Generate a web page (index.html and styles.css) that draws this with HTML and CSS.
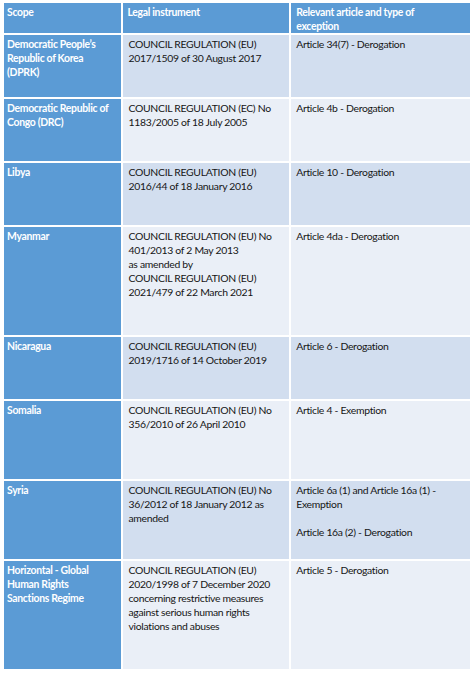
FILE: index.html
```html
<!DOCTYPE html>
<html>
<head>
<meta charset="utf-8">
<link rel="stylesheet" href="styles.css">
</head>
<body>
<table class="sanctions">
  <colgroup>
    <col class="c-scope">
    <col class="c-legal">
    <col class="c-article">
  </colgroup>
  <thead>
    <tr class="h-head">
      <th class="scope">Scope</th>
      <th class="legal">Legal instrument</th>
      <th class="article">Relevant article and type of<br>exception</th>
    </tr>
  </thead>
  <tbody>
    <tr class="dark h62">
      <th class="scope">Democratic People’s<br>Republic of Korea<br>(DPRK)</th>
      <td class="legal">COUNCIL REGULATION (EU)<br>2017/1509 of 30 August 2017</td>
      <td class="article">Article 34(7) - Derogation</td>
    </tr>
    <tr class="light h62">
      <th class="scope">Democratic Republic of<br>Congo (DRC)</th>
      <td class="legal">COUNCIL REGULATION (EC) No<br>1183/2005 of 18 July 2005</td>
      <td class="article">Article 4b - Derogation</td>
    </tr>
    <tr class="dark h62">
      <th class="scope">Libya</th>
      <td class="legal">COUNCIL REGULATION (EU)<br>2016/44 of 18 January 2016</td>
      <td class="article">Article 10 - Derogation</td>
    </tr>
    <tr class="light h108">
      <th class="scope">Myanmar</th>
      <td class="legal">COUNCIL REGULATION (EU) No<br>401/2013 of 2 May 2013<br>as amended by<br>COUNCIL REGULATION (EU)<br>2021/479 of 22 March 2021</td>
      <td class="article">Article 4da - Derogation</td>
    </tr>
    <tr class="dark h62">
      <th class="scope">Nicaragua</th>
      <td class="legal">COUNCIL REGULATION (EU)<br>2019/1716 of 14 October 2019</td>
      <td class="article">Article 6 - Derogation</td>
    </tr>
    <tr class="light h78">
      <th class="scope">Somalia</th>
      <td class="legal">COUNCIL REGULATION (EU) No<br>356/2010 of 26 April 2010</td>
      <td class="article">Article 4 - Exemption</td>
    </tr>
    <tr class="dark h78">
      <th class="scope">Syria</th>
      <td class="legal">COUNCIL REGULATION (EU) No<br>36/2012 of 18 January 2012 as<br>amended</td>
      <td class="article"><p class="para">Article 6a (1) and Article 16a (1) -<br>Exemption</p><p class="para">Article 16a (2) - Derogation</p></td>
    </tr>
    <tr class="light h108">
      <th class="scope">Horizontal - Global<br>Human Rights<br>Sanctions Regime</th>
      <td class="legal">COUNCIL REGULATION (EU)<br>2020/1998 of 7 December 2020<br>concerning restrictive measures<br>against serious human rights<br>violations and abuses</td>
      <td class="article">Article 5 - Derogation</td>
    </tr>
  </tbody>
</table>
</body>
</html>
```
FILE: styles.css
```css
html, body {
  margin: 0;
  padding: 0;
  background: #ffffff;
}
body {
  padding: 1px 0 0 2px;
  font-family: Lato, "Liberation Sans", sans-serif;
  font-size: 10.4px;
  letter-spacing: -0.3px;
  line-height: 14px;
  color: #151515;
}
.sanctions {
  border-collapse: separate;
  border-spacing: 2px;
  table-layout: fixed;
  width: 470px;
}
.c-scope { width: 116px; }
.c-legal { width: 166px; }
.c-article { width: 178px; }
.sanctions th,
.sanctions td {
  vertical-align: top;
  text-align: left;
  padding: 2px 2px 0 5px;
  white-space: nowrap;
  overflow: hidden;
}
.sanctions th {
  font-weight: 700;
}
.sanctions thead th {
  background: #5b9bd5;
  color: #ffffff;
  padding-top: 2px;
}
.sanctions th.scope {
  background: #5b9bd5;
  color: #ffffff;
  padding-left: 3px;
}
.sanctions td.legal { padding-left: 6px; }
.sanctions td.article { padding-left: 5px; }
.dark td { background: #d2deef; }
.light td { background: #eaeff7; }
.h-head { height: 30px; }
.h62 { height: 62px; }
.h78 { height: 78px; }
.h108 { height: 108px; }
.para { margin: 0 0 14px 0; }
.para:last-child { margin-bottom: 0; }
```
